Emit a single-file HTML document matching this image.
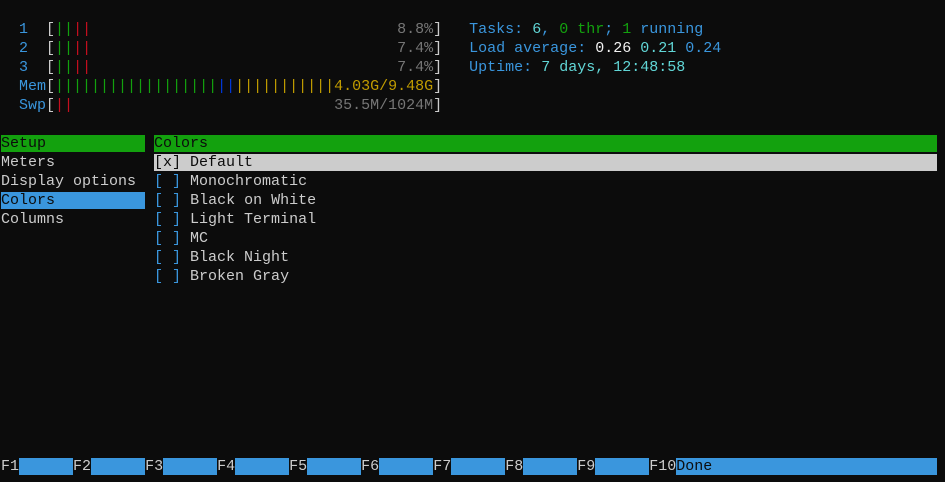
<!DOCTYPE html>
<html><head><meta charset="utf-8"><style>
html,body{margin:0;padding:0;background:#0c0c0c;width:945px;height:482px;overflow:hidden}
#t{position:absolute;left:1px;top:1px;font-family:"Liberation Mono",monospace;font-size:15px;line-height:19px;color:#cccccc}
.l{height:19px;white-space:pre}
.b{color:#3a96dd}.g{color:#13a10e}.r{color:#c50f1f}.y{color:#c19c00}.c{color:#61d6d6}.d{color:#767676}.bb{color:#0037da}.w{color:#f2f2f2}
.gb{background:#13a10e;color:#0c0c0c}.bl{background:#3a96dd;color:#0c0c0c}.gr{background:#cccccc;color:#0c0c0c}
</style></head><body><div id="t">
<div class="l"> </div>
<div class="l">  <span class="b">1</span>  [<span class="g">||</span><span class="r">||</span>                                  <span class="d">8.8%</span>]   <span class="b">Tasks: </span><span class="c">6</span><span class="b">, </span><span class="g">0 thr</span><span class="b">; </span><span class="g">1</span><span class="b"> running</span></div>
<div class="l">  <span class="b">2</span>  [<span class="g">||</span><span class="r">||</span>                                  <span class="d">7.4%</span>]   <span class="b">Load average: </span><span class="w">0.26 </span><span class="c">0.21 </span><span class="b">0.24</span></div>
<div class="l">  <span class="b">3</span>  [<span class="g">||</span><span class="r">||</span>                                  <span class="d">7.4%</span>]   <span class="b">Uptime: </span><span class="c">7 days, 12:48:58</span></div>
<div class="l">  <span class="b">Mem</span>[<span class="g">||||||||||||||||||</span><span class="bb">||</span><span class="y">|||||||||||4.03G/9.48G</span>]</div>
<div class="l">  <span class="b">Swp</span>[<span class="r">||</span>                             <span class="d">35.5M/1024M</span>]</div>
<div class="l"> </div>
<div class="l"><span class="gb">Setup           </span> <span class="gb">Colors                                                                                 </span></div>
<div class="l">Meters           <span class="gr">[x] Default                                                                            </span></div>
<div class="l">Display options  <span class="b">[ ]</span> Monochromatic</div>
<div class="l"><span class="bl">Colors          </span> <span class="b">[ ]</span> Black on White</div>
<div class="l">Columns          <span class="b">[ ]</span> Light Terminal</div>
<div class="l">                 <span class="b">[ ]</span> MC</div>
<div class="l">                 <span class="b">[ ]</span> Black Night</div>
<div class="l">                 <span class="b">[ ]</span> Broken Gray</div>
<div class="l" style="position:absolute;top:456px;left:0">F1<span class="bl">      </span>F2<span class="bl">      </span>F3<span class="bl">      </span>F4<span class="bl">      </span>F5<span class="bl">      </span>F6<span class="bl">      </span>F7<span class="bl">      </span>F8<span class="bl">      </span>F9<span class="bl">      </span>F10<span class="bl">Done                         </span></div>
</div></body></html>
